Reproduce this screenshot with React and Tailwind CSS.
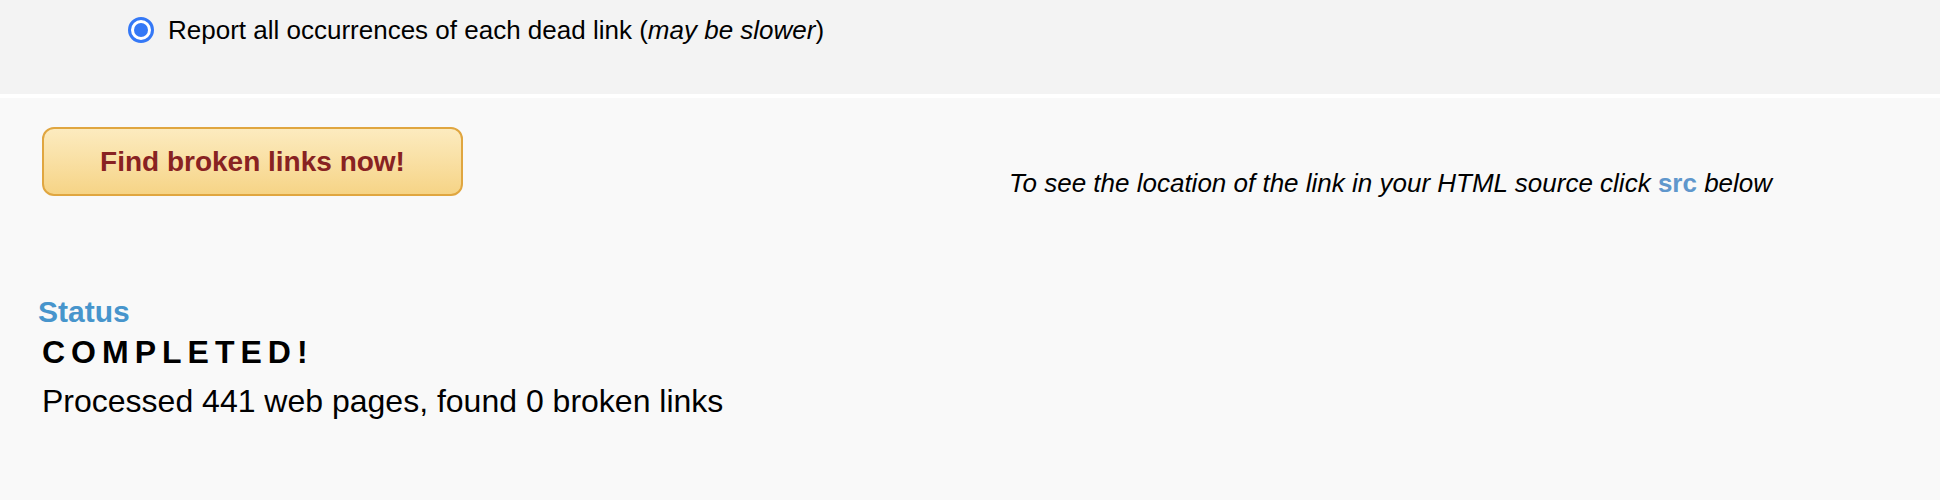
const OPTIONS = [
  { id: 'distinct', label: 'Report distinct broken links only', checked: false },
  { id: 'all', label: 'Report all occurrences of each dead link', note: 'may be slower', checked: true }
];

function Radio({ checked }) {
  return (
    <span
      className={`shrink-0 w-[26px] h-[26px] rounded-full flex items-center justify-center ${
        checked ? 'border-[3px] border-[#3478f6] bg-white' : 'border-[2px] border-[#9a9a9a] bg-white'
      }`}
    >
      {checked && <span className="w-[14px] h-[14px] rounded-full bg-[#3478f6]" />}
    </span>
  );
}

export default function App() {
  return (
    <div className="w-[1940px] h-[500px] bg-[#f9f9f9] font-['Liberation_Sans',Arial,sans-serif] text-black overflow-hidden">
      {/* options panel, scrolled so only the last option shows */}
      <div className="h-[94px] bg-[#f3f3f3] overflow-hidden">
        <div className="-mt-[28px] pl-[128px] flex flex-col gap-[19px]">
          {OPTIONS.map((o) => (
            <label key={o.id} className="flex items-end gap-[14px] h-[26px]">
              <Radio checked={o.checked} />
              <span className="text-[26px] leading-[26px] whitespace-nowrap">
                {o.label}
                {o.note && (
                  <>
                    {' ('}
                    <i>{o.note}</i>
                    {')'}
                  </>
                )}
              </span>
            </label>
          ))}
        </div>
      </div>
      <div className="h-[4px] bg-white" />

      <div className="px-[42px] pt-[29px]">
        <div className="flex items-end">
          <button className="w-[421px] h-[69px] rounded-[12px] border-2 border-[#e0a640] bg-gradient-to-b from-[#fcebbf] to-[#f6d486] text-[28px] font-bold text-[#882222] leading-none">
            Find broken links now!
          </button>
          <p className="ml-[546px] text-[26px] leading-[26px] italic whitespace-nowrap">
            To see the location of the link in your HTML source click{' '}
            <span className="not-italic font-bold text-[#5f97cc]">src</span> below
          </p>
        </div>

        <div className="mt-[101px] -ml-[4px] text-[30px] leading-[30px] font-bold text-[#4795cc]">Status</div>
        <div className="mt-[9px] text-[32px] leading-[32px] font-bold tracking-[6px]">COMPLETED!</div>
        <div className="mt-[17px] text-[32px] leading-[32px] whitespace-nowrap">
          Processed 441 web pages, found 0 broken links
        </div>
      </div>
    </div>
  );
}
